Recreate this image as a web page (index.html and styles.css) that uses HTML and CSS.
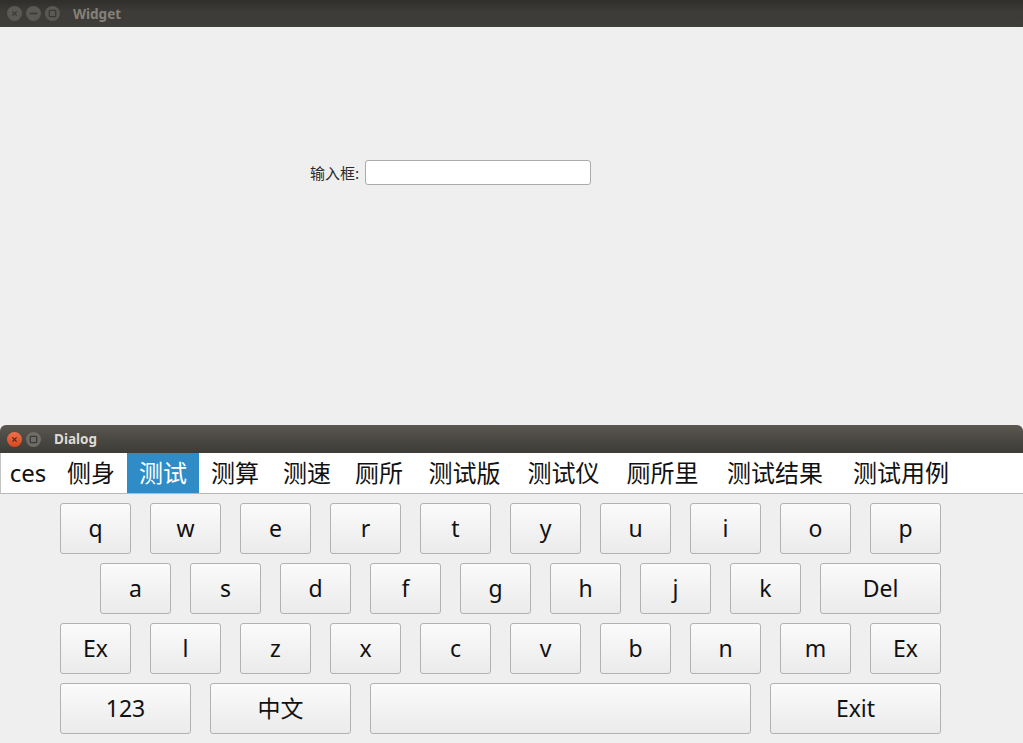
FILE: index.html
```html
<!DOCTYPE html>
<html lang="zh">
<head>
<meta charset="utf-8">
<title>Widget</title>
<link rel="stylesheet" href="styles.css">
</head>
<body>
<div class="screen">
  <div class="win main-win">
    <div class="titlebar inactive">
      <div class="wbtns">
        <svg class="wbtn" viewBox="0 0 15 15" width="15" height="15"><circle cx="7.5" cy="7.5" r="7.5" fill="#5a5954"/><path d="M5.3 5.3 L9.7 9.7 M9.7 5.3 L5.3 9.7" stroke="#3a3935" stroke-width="1.2" fill="none"/></svg>
        <svg class="wbtn" viewBox="0 0 15 15" width="15" height="15"><circle cx="7.5" cy="7.5" r="7.5" fill="#5a5954"/><path d="M3.8 7.5 H11.2" stroke="#3a3935" stroke-width="1.6" fill="none"/></svg>
        <svg class="wbtn" viewBox="0 0 15 15" width="15" height="15"><circle cx="7.5" cy="7.5" r="7.5" fill="#5a5954"/><rect x="4.3" y="4.3" width="6.4" height="6.4" rx="0.8" stroke="#3a3935" stroke-width="1.3" fill="none"/></svg>
      </div>
      <span class="title">Widget</span>
    </div>
    <div class="main-content">
      <div class="form-row">
        <label class="form-label" for="inp">输入框:</label>
        <input class="form-input" id="inp" type="text">
      </div>
    </div>
  </div>

  <div class="win dialog-win">
    <div class="titlebar active">
      <div class="wbtns dlg">
        <svg class="wbtn" viewBox="0 0 15 15" width="15" height="15"><defs><linearGradient id="rg" x1="0" y1="0" x2="0" y2="1"><stop offset="0" stop-color="#f0704a"/><stop offset="1" stop-color="#d9471d"/></linearGradient></defs><circle cx="7.5" cy="7.5" r="7.5" fill="url(#rg)"/><path d="M5.4 5.4 L9.6 9.6 M9.6 5.4 L5.4 9.6" stroke="#4a2a1e" stroke-width="1.2" fill="none"/></svg>
        <svg class="wbtn" viewBox="0 0 15 15" width="15" height="15"><circle cx="7.5" cy="7.5" r="7.5" fill="#6f6d67"/><rect x="4.3" y="4.3" width="6.4" height="6.4" rx="0.8" stroke="#3a3935" stroke-width="1.3" fill="none"/></svg>
      </div>
      <span class="title">Dialog</span>
    </div>
    <div class="candbar">
      <span class="cand w-ces">ces</span>
      <span class="cand w2">侧身</span>
      <span class="cand w2 sel">测试</span>
      <span class="cand w2">测算</span>
      <span class="cand w2">测速</span>
      <span class="cand w2">厕所</span>
      <span class="cand w3">测试版</span>
      <span class="cand w3">测试仪</span>
      <span class="cand w3">厕所里</span>
      <span class="cand w4">测试结果</span>
      <span class="cand w4">测试用例</span>
    </div>
    <div class="keyboard">
      <div class="krow r1">
        <button class="key">q</button><button class="key">w</button><button class="key">e</button><button class="key">r</button><button class="key">t</button><button class="key">y</button><button class="key">u</button><button class="key">i</button><button class="key">o</button><button class="key">p</button>
      </div>
      <div class="krow r2">
        <button class="key">a</button><button class="key">s</button><button class="key">d</button><button class="key">f</button><button class="key">g</button><button class="key">h</button><button class="key">j</button><button class="key">k</button><button class="key k-del">Del</button>
      </div>
      <div class="krow r3">
        <button class="key">Ex</button><button class="key">l</button><button class="key">z</button><button class="key">x</button><button class="key">c</button><button class="key">v</button><button class="key">b</button><button class="key">n</button><button class="key">m</button><button class="key">Ex</button>
      </div>
      <div class="krow r4">
        <button class="key k-123">123</button><button class="key k-zh">中文</button><button class="key k-space"></button><button class="key k-exit">Exit</button>
      </div>
    </div>
  </div>
</div>
</body>
</html>
```

FILE: styles.css
```css
* { box-sizing: border-box; }
html, body {
  margin: 0;
  padding: 0;
  width: 1023px;
  height: 743px;
  overflow: hidden;
  background: #efefef;
  font-family: "Noto Sans", "Noto Sans CJK SC", sans-serif;
}
.screen {
  width: 1023px;
  height: 743px;
  display: flex;
  flex-direction: column;
}
.win { display: flex; flex-direction: column; }
.main-win { height: 425px; background: #efefef; }
.dialog-win { flex: 1; background: #efefef; }

.titlebar {
  height: 27px;
  display: flex;
  align-items: center;
  flex-shrink: 0;
}
.titlebar.inactive {
  background: linear-gradient(#2f2e2b, #3c3b37 40%, #3e3d39);
}
.titlebar.active {
  height: 28px;
  border-radius: 6px 6px 0 0;
  background: linear-gradient(#5b5850, #4a4842 50%, #3e3c37);
}
.wbtns {
  display: flex;
  gap: 4px;
  padding-left: 7px;
  align-items: center;
}
.wbtn { display: block; }
.title {
  font-family: "Noto Sans", sans-serif;
  font-weight: bold;
  font-size: 13.5px;
}
.inactive .title { color: #858179; margin-left: 13px; }
.active .title { color: #dfdbd2; margin-left: 13px; }

.main-content {
  flex: 1;
  padding: 133px 0 0 310px;
}
.form-row {
  display: flex;
  align-items: center;
  gap: 7px;
}
.form-label {
  font-family: "Noto Sans CJK SC", sans-serif;
  font-size: 15px;
  color: #2a2a2a;
  width: 48px;
  white-space: nowrap;
}
.form-input {
  width: 226px;
  height: 25px;
  margin: 0;
  border: 1px solid #ababab;
  border-radius: 3px;
  background: #fff;
  padding: 0 4px;
  outline: none;
}

.candbar {
  height: 41px;
  background: #fff;
  border-bottom: 1px solid #b8b8b8;
  border-left: 1px solid #c4c4c4;
  display: flex;
  align-items: stretch;
  flex-shrink: 0;
}
.cand {
  display: flex;
  align-items: center;
  justify-content: center;
  font-family: "Noto Sans", "Noto Sans CJK SC", sans-serif;
  font-size: 24px;
  color: #111;
  white-space: nowrap;
  line-height: 1;
}
.w-ces { width: 54px; }
.w2 { width: 72px; }
.w3 { width: 99px; }
.w4 { width: 126px; }
.cand.sel { background: #308cc6; color: #fff; }

.keyboard {
  padding-top: 9px;
  display: flex;
  flex-direction: column;
  gap: 9px;
}
.krow {
  display: flex;
  gap: 19px;
  height: 51px;
}
.r1, .r3, .r4 { padding-left: 60px; }
.r2 { padding-left: 100px; }
.key {
  width: 71px;
  height: 51px;
  margin: 0;
  padding: 0;
  border: 1px solid #b2b2b2;
  border-radius: 3px;
  background: linear-gradient(#fbfbfb, #f1f1f1 60%, #ebebeb);
  font-family: "Noto Sans", "Noto Sans CJK SC", sans-serif;
  font-size: 23px;
  color: #111;
  display: flex;
  align-items: center;
  justify-content: center;
  line-height: 1;
}
.k-del { width: 121px; }
.k-123 { width: 131px; }
.k-zh { width: 141px; }
.k-space { width: 381px; }
.k-exit { width: 171px; }
```
